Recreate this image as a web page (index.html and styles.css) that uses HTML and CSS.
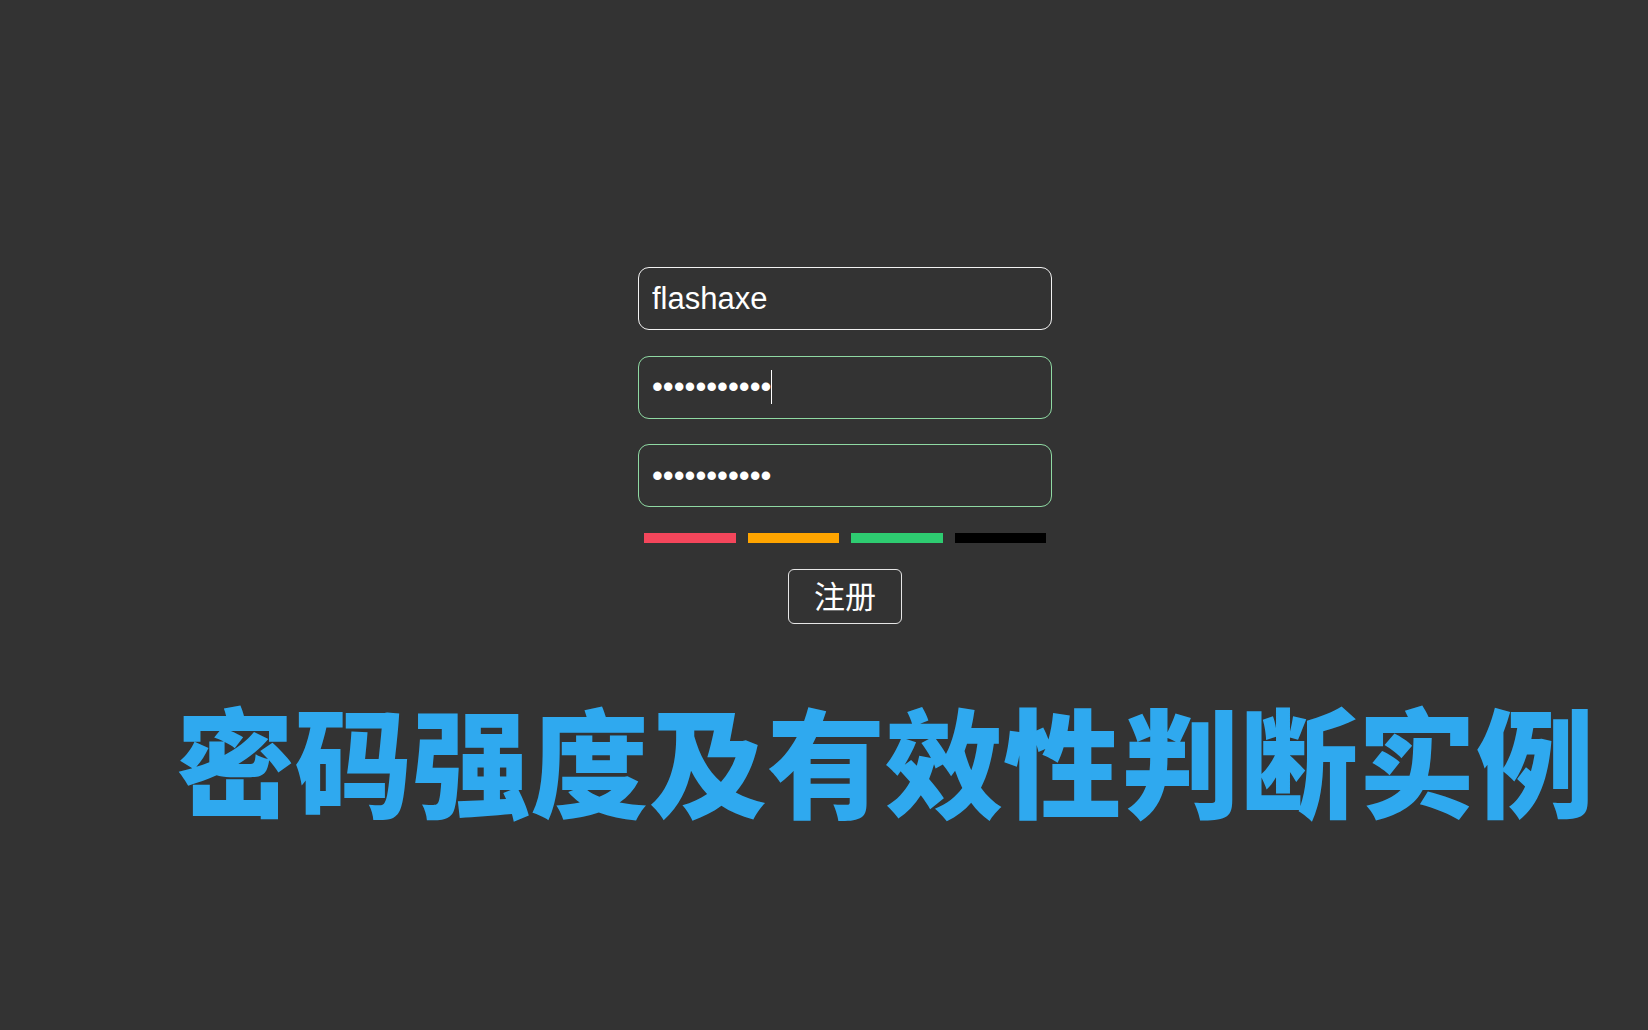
FILE: index.html
```html
<!DOCTYPE html>
<html lang="zh-CN">
<head>
<meta charset="utf-8">
<title>密码强度及有效性判断实例</title>
<link rel="stylesheet" href="styles.css">
</head>
<body>
<main class="page">
  <form class="form">
    <input class="field" type="text" value="flashaxe">
    <div class="field-wrap">
      <input class="field valid" type="password" value="12345678901">
      <span class="caret"></span>
    </div>
    <input class="field valid" type="password" value="12345678901">
    <div class="strength">
      <span class="bar weak"></span>
      <span class="bar medium"></span>
      <span class="bar strong"></span>
      <span class="bar off"></span>
    </div>
    <button class="submit" type="button">注册</button>
  </form>
  <h1 class="title">密码强度及有效性判断实例</h1>
</main>
</body>
</html>
```

FILE: styles.css
```css
html, body {
  margin: 0;
  padding: 0;
  background: #333333;
  height: 100%;
}
body {
  font-family: "Liberation Sans", Arial, "Noto Sans CJK SC", sans-serif;
  overflow: hidden;
}
.page {
  padding-top: 267px;
}
.form {
  width: 414px;
  margin-left: 638px;
  display: flex;
  flex-direction: column;
  align-items: stretch;
  gap: 25.5px;
}
.field-wrap {
  position: relative;
  display: flex;
}
.field {
  box-sizing: border-box;
  width: 414px;
  height: 63px;
  margin: 0;
  padding: 0 0 0 13px;
  border: 1px solid #f2f2f2;
  border-radius: 11px;
  background: transparent;
  color: #ffffff;
  font-family: "Liberation Sans", Arial, sans-serif;
  font-size: 31px;
  outline: none;
}
.field.valid {
  border-color: #8fd9a3;
}
.caret {
  position: absolute;
  left: 133px;
  top: 14px;
  width: 1px;
  height: 34px;
  background: #ffffff;
}
.strength {
  display: flex;
  height: 10.5px;
}
.bar {
  flex: 1;
  margin: 0 6px;
  display: block;
}
.weak { background: #f4465b; }
.medium { background: #ffa500; }
.strong { background: #2ecc71; }
.off { background: #000000; }
.submit {
  align-self: center;
  box-sizing: border-box;
  width: 114px;
  height: 55px;
  margin: 0;
  padding: 0 0 3px 0;
  border: 1px solid #e6e6e6;
  border-radius: 6px;
  background: transparent;
  color: #ffffff;
  font-family: "Noto Sans CJK SC", sans-serif;
  font-size: 31px;
  line-height: 1;
  cursor: pointer;
}
.title {
  margin: 75px 0 0 176px;
  white-space: nowrap;
  font-family: "Noto Sans CJK SC", sans-serif;
  font-weight: 900;
  font-size: 118.2px;
  line-height: 1;
  color: #2fa9ef;
}
```
